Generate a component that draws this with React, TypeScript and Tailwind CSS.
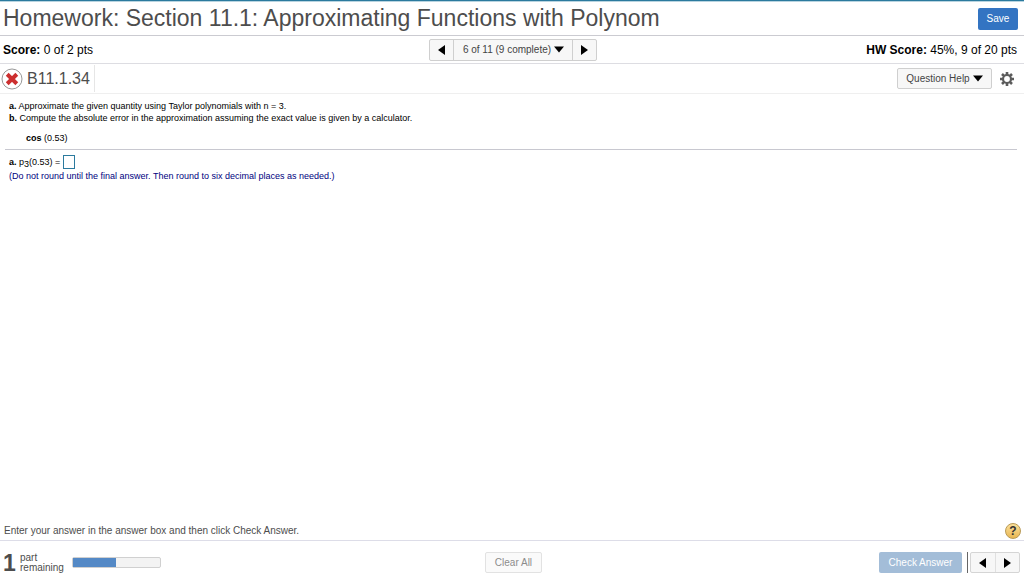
import React, { useState } from 'react';

type ArrowProps = { direction: 'left' | 'right' | 'down' };

const Arrow = ({ direction }: ArrowProps) => {
  if (direction === 'down') {
    return (
      <svg width="10" height="7" viewBox="0 0 10 7" aria-hidden="true">
        <path d="M0 0.5h10L5 6.5z" fill="#000" />
      </svg>
    );
  }
  return (
    <svg width="7" height="10" viewBox="0 0 7 10" aria-hidden="true">
      <path d={direction === 'left' ? 'M7 0v10L0 5z' : 'M0 0v10l7-5z'} fill="#000" />
    </svg>
  );
};

const WrongIcon = () => (
  <svg width="22" height="22" viewBox="0 0 22 22" role="img" aria-label="Incorrect">
    <circle cx="11" cy="11" r="10" fill="#fff" stroke="#999" strokeWidth="1" />
    <path d="M6.2 6.3l9.6 9.4M15.8 6.3l-9.6 9.4" stroke="#cc2f2f" strokeWidth="4" />
  </svg>
);

const GearIcon = () => (
  <svg width="14" height="14" viewBox="0 0 14 14" aria-hidden="true">
    <g stroke="#5c5c5c" strokeWidth="2.6">
      <path d="M7 0v3M7 11v3M0 7h3M11 7h3" />
      <path d="M2 2l2.2 2.2M9.8 9.8L12 12M12 2L9.8 4.2M4.2 9.8L2 12" />
    </g>
    <circle cx="7" cy="7" r="4" fill="#fff" stroke="#5c5c5c" strokeWidth="2.2" />
  </svg>
);

const App = () => {
  const [answer, setAnswer] = useState('');

  return (
    <div className="flex min-h-screen flex-col border-t border-[#2b7a9e] bg-white font-['Liberation_Sans',Arial,sans-serif] text-black">
      <header className="flex h-[35px] shrink-0 items-center justify-between border-b border-[#cbcbd1] border-t border-t-[#b8d4e0] pr-1.5 pl-[3px]">
        <h1 className="pb-0.5 text-[23px] leading-7 whitespace-nowrap text-[#4d4d4d]">
          Homework: Section 11.1: Approximating Functions with Polynom
        </h1>
        <button type="button" className="h-[22px] w-10 rounded-[2px] bg-[#3374c2] text-[10px] text-white">
          Save
        </button>
      </header>

      <div className="grid h-7 shrink-0 grid-cols-3 items-center border-b border-[#dddde2] pl-[3px] text-[12px]">
        <p><b>Score:</b> 0 of 2 pts</p>
        <nav className="flex h-[22px] w-[168px] justify-self-center rounded-[2px] border border-[#cfcfcf] bg-[#f7f7f7] text-[#444]">
          <button type="button" aria-label="Previous question" className="flex w-6 items-center justify-center border-r border-[#cfcfcf]">
            <Arrow direction="left" />
          </button>
          <button type="button" className="flex flex-1 items-center justify-center gap-[3px] text-[10px] whitespace-nowrap">
            6 of 11 (9 complete)
            <Arrow direction="down" />
          </button>
          <button type="button" aria-label="Next question" className="flex w-6 items-center justify-center border-l border-[#cfcfcf]">
            <Arrow direction="right" />
          </button>
        </nav>
        <p className="pr-[7px] text-right"><b>HW Score:</b> 45%, 9 of 20 pts</p>
      </div>

      <div className="flex h-[30px] shrink-0 items-center justify-between border-b border-[#efefef] pr-2.5 pl-px">
        <div className="flex h-[27px] items-center gap-1 border-r border-[#e6e6e6] pr-1">
          <WrongIcon />
          <h2 className="text-[16px] text-[#4d4d4d]">B11.1.34</h2>
        </div>
        <div className="flex items-center gap-2">
          <button type="button" className="flex h-[21px] w-[95px] items-center justify-center gap-[3px] rounded-[2px] border border-[#cfcfcf] bg-[#f7f7f7] text-[10px] whitespace-nowrap text-[#444]">
            Question Help
            <Arrow direction="down" />
          </button>
          <button type="button" aria-label="Settings">
            <GearIcon />
          </button>
        </div>
      </div>

      <main className="flex-1 pt-1.5 pr-[7px] pl-[5px] text-[9px] leading-3">
        <div className="border-b border-[#c8c8d0] pb-[5px] pl-1">
          <p><b>a.</b> Approximate the given quantity using Taylor polynomials with n = 3.</p>
          <p><b>b.</b> Compute the absolute error in the approximation assuming the exact value is given by a calculator.</p>
          <p className="mt-2 pl-[17px]"><b>cos</b> (0.53)</p>
        </div>
        <div className="pt-1 pl-1">
          <div className="flex h-4 items-center gap-[3px]">
            <label htmlFor="answer">
              <b>a.</b> p<sub className="text-[9px]">3</sub>(0.53) =
            </label>
            <input
              id="answer"
              type="text"
              className="h-3.5 w-3 border border-[#2b7a9e]"
              value={answer}
              onChange={(e) => setAnswer(e.target.value)}
            />
          </div>
          <p className="text-[#000080]">
            (Do not round until the final answer. Then round to six decimal places as needed.)
          </p>
        </div>
      </main>

      <footer className="shrink-0 text-[#4d4d4d]">
        <div className="flex h-5 items-center justify-between border-b border-[#dddde8] pr-[3px] pl-1 text-[10px]">
          <p>Enter your answer in the answer box and then click Check Answer.</p>
          <button
            type="button"
            aria-label="Help"
            className="h-4 w-4 rounded-full border border-[#b99a55] bg-linear-to-b from-[#fbe09a] to-[#e9b750] text-[12px] leading-none font-bold text-[#333]"
          >
            ?
          </button>
        </div>
        <div className="grid h-[43px] grid-cols-3 items-center pl-[3px]">
          <div className="flex items-center">
            <strong className="w-[17px] text-[23px] leading-6">1</strong>
            <span className="text-[10px] leading-[10px]">part<br />remaining</span>
            <div
              role="progressbar"
              aria-label="Parts completed"
              aria-valuenow={50}
              className="ml-2 h-[11px] w-[89px] rounded-[2px] border border-[#d0d0d0] bg-[#f3f3f3]"
            >
              <div className="h-full w-1/2 bg-[#5489c6]" />
            </div>
          </div>
          <button type="button" disabled className="h-[21px] w-[57px] justify-self-center rounded-[2px] border border-[#e2e2e2] bg-[#fafafa] text-[10px] text-[#8c8c8c]">
            Clear All
          </button>
          <div className="flex items-center justify-end pr-1">
            <button type="button" disabled className="h-[21px] w-[83px] rounded-[2px] bg-[#a3bdd8] text-[10px] whitespace-nowrap text-white">
              Check Answer
            </button>
            <div className="ml-[5px] h-[21px] w-px bg-[#666]" />
            <div className="ml-0.5 flex h-[21px] w-[50px] rounded-[2px] border border-[#d5d5d5] bg-[#f7f7f7]">
              <button type="button" aria-label="Previous part" className="flex flex-1 items-center justify-center border-r border-[#e0e0e0]">
                <Arrow direction="left" />
              </button>
              <button type="button" aria-label="Next part" className="flex flex-1 items-center justify-center">
                <Arrow direction="right" />
              </button>
            </div>
          </div>
        </div>
      </footer>
    </div>
  );
};

export default App;
